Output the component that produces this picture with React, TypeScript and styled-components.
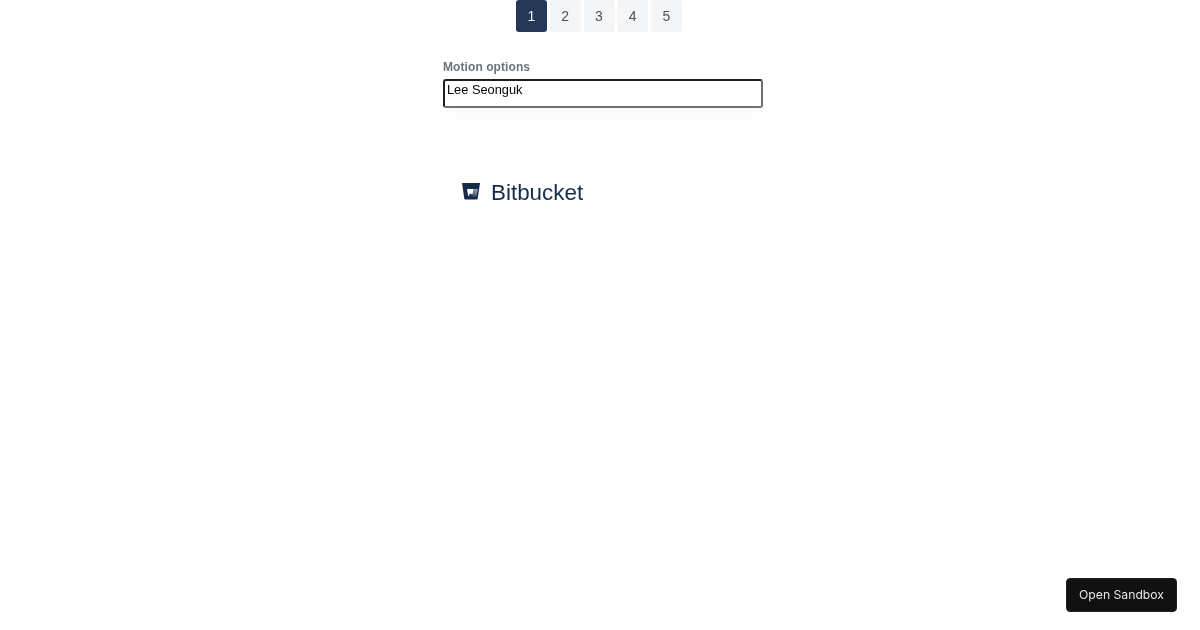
import styled, { createGlobalStyle } from "styled-components";

const GlobalStyle = createGlobalStyle`
  html, body {
    margin: 0;
    height: 100%;
    background: #fff;
    font-family: "Liberation Sans", Arial, sans-serif;
  }
`;

const Page = styled.div`
  display: flex;
  flex-direction: column;
  align-items: center;
  will-change: transform;
`;

const Pagination = styled.nav`
  display: flex;
  gap: 2.75px;
  margin-left: -2px;
`;

const PageButton = styled.button<{ $active?: boolean }>`
  width: 31px;
  height: 32px;
  padding: 0;
  border: none;
  border-radius: 3px;
  background: ${({ $active }) => ($active ? "#253858" : "#f4f5f7")};
  color: ${({ $active }) => ($active ? "#f4f5f7" : "#4a5260")};
  font-family: "Liberation Sans", Arial, sans-serif;
  font-size: 14px;
`;

const Field = styled.div`
  width: 320px;
  margin: 27px 0 0 6px;
`;

const Label = styled.label`
  display: block;
  height: 20px;
  color: #6b7280;
  font-size: 12px;
  line-height: 16px;
  font-weight: 700;
  letter-spacing: 0.08px;
`;

const Input = styled.div`
  box-sizing: border-box;
  height: 29px;
  padding: 1px 2px;
  border: 2px solid;
  border-color: #1f1f1f #6f6f76 #6f6f76 #1f1f1f;
  border-radius: 3px;
  background: #fff;
  color: #000;
  font-size: 12.8px;
  line-height: 15px;
  box-shadow: 0 32px 28px -14px rgba(23, 43, 77, 0.08), 0 10px 30px rgba(23, 43, 77, 0.025);
`;

const Logo = styled.div`
  display: flex;
  align-items: center;
  gap: 11px;
  width: 320px;
  margin: 70px 0 0 6px;
  padding-left: 19px;
  box-sizing: border-box;
  color: #172b4d;
  font-size: 22.4px;
  line-height: 30px;
`;

const SandboxButton = styled.button`
  position: fixed;
  right: 23px;
  bottom: 18px;
  width: 111px;
  height: 34px;
  padding: 0 0 1px;
  border: 1px solid #222;
  border-radius: 4px;
  background: #111;
  color: #e8e8e8;
  font-family: Inter, sans-serif;
  font-size: 12.2px;
  will-change: transform;
`;

const LogoMark = styled.svg`
  margin-top: -3px;
`;

function BitbucketMark() {
  return (
    <LogoMark width="18" height="18" viewBox="0 0 18 18">
      <defs>
        <linearGradient id="bb" x1="1" y1="0.1" x2="0.1" y2="1">
          <stop offset="0" stopColor="#a5adba" />
          <stop offset="1" stopColor="#172b4d" />
        </linearGradient>
      </defs>
      <path d="M0 0h18l-2.3 15.7a1 1 0 0 1-1 0.8H3.3a1 1 0 0 1-1-0.8z" fill="#172b4d" />
      <path d="M5 6h9l-1 7H6.2z" fill="#fff" />
      <path d="M11.4 6h4.4l-1.3 7.4H6.6l0.9-2.6h3.2z" fill="url(#bb)" />
    </LogoMark>
  );
}

export default function App() {
  return (
    <>
      <GlobalStyle />
      <Page>
        <Pagination>
          {[1, 2, 3, 4, 5].map((n) => (
            <PageButton key={n} $active={n === 1}>
              {n}
            </PageButton>
          ))}
        </Pagination>
        <Field>
          <Label>Motion options</Label>
          <Input>Lee Seonguk</Input>
        </Field>
        <Logo>
          <BitbucketMark />
          <span>Bitbucket</span>
        </Logo>
      </Page>
      <SandboxButton>Open Sandbox</SandboxButton>
    </>
  );
}
